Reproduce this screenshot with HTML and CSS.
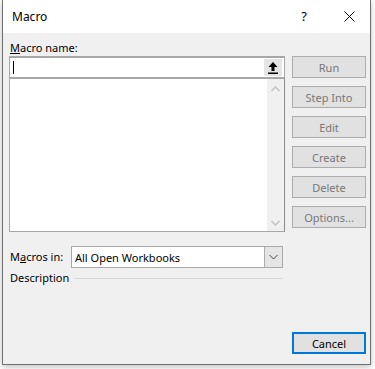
FILE: index.html
```html
<!DOCTYPE html>
<html lang="en">
<head>
  <meta charset="UTF-8">
  <title>Macro</title>
  <link rel="stylesheet" href="styles.css">
</head>
<body>
  <div class="dialog">
    <div class="titlebar">
      <span class="title">Macro</span>
      <span class="help">?</span>
      <span class="close">
        <svg width="11" height="11" viewBox="0 0 11 11"><path d="M0.5 0.5 L10.5 10.5 M10.5 0.5 L0.5 10.5" stroke="#000" stroke-width="1" fill="none"/></svg>
      </span>
    </div>

    <div class="content">
      <div class="main">
        <div class="left">
          <div class="label"><u>M</u>acro name:</div>
          <div class="name-box">
            <span class="caret"></span>
            <span class="pick">
              <svg width="10" height="12" viewBox="0 0 10 12"><path d="M5 0 L9.5 5 L6.5 5 L6.5 9 L3.5 9 L3.5 5 L0.5 5 Z" fill="#000"/><rect x="0" y="10.5" width="10" height="1.5" fill="#000"/></svg>
            </span>
          </div>
          <div class="list">
            <div class="scroll">
              <svg width="9" height="6" viewBox="0 0 9 6"><path d="M0.5 5 L4.5 1 L8.5 5" stroke="#c2c2c2" stroke-width="1.5" fill="none"/></svg>
              <svg width="9" height="6" viewBox="0 0 9 6"><path d="M0.5 1 L4.5 5 L8.5 1" stroke="#c2c2c2" stroke-width="1.5" fill="none"/></svg>
            </div>
          </div>
          <div class="macros-in">
            <span class="label">M<u>a</u>cros in:</span>
            <div class="select">
              <span class="value">All Open Workbooks</span>
              <span class="drop">
                <svg width="9" height="6" viewBox="0 0 9 6"><path d="M0.5 1 L4.5 5 L8.5 1" stroke="#444" stroke-width="1" fill="none"/></svg>
              </span>
            </div>
          </div>
          <div class="description">
            <span class="label">Description</span>
            <span class="rule"></span>
          </div>
        </div>

        <div class="buttons">
          <div class="btn disabled">Run</div>
          <div class="btn disabled">Step Into</div>
          <div class="btn disabled">Edit</div>
          <div class="btn disabled">Create</div>
          <div class="btn disabled">Delete</div>
          <div class="btn disabled">Options...</div>
        </div>
      </div>

      <div class="footer">
        <div class="btn default">Cancel</div>
      </div>
    </div>
  </div>
</body>
</html>
```

FILE: styles.css
```css
body {
  margin: 0;
  width: 375px;
  height: 369px;
  overflow: hidden;
  background-color: #ffffff;
  font-family: 'Noto Sans', 'Open Sans', sans-serif;
  font-size: 11px;
  color: #000000;
}

.dialog {
  margin-left: 2px;
  width: 367px;
  height: 364px;
  border-left: 1px solid #707070;
  border-right: 1px solid #707070;
  border-bottom: 1px solid #707070;
  box-shadow: 0 2px 6px rgba(0, 0, 0, 0.25);
  display: flex;
  flex-direction: column;
  background-color: #f0f0f0;
}

.titlebar {
  height: 33px;
  background-color: #ffffff;
  display: flex;
  align-items: center;
}

.title {
  margin-left: 9px;
  font-size: 12px;
  flex: 1;
  margin-top: -1px;
}

.help {
  font-size: 13px;
  width: 12px;
  text-align: center;
  margin-right: 34px;
  margin-top: -1px;
}

.close {
  display: flex;
  margin-right: 15px;
  margin-top: -1px;
}

.content {
  flex: 1;
  display: flex;
  flex-direction: column;
  padding: 0 4px 10px 6px;
}

.main {
  display: flex;
  gap: 7px;
}

.left {
  width: 276px;
  display: flex;
  flex-direction: column;
}

.label {
  line-height: 16px;
  padding-left: 1px;
}

.left > .label {
  margin-top: 7px;
}

.name-box {
  height: 19px;
  background-color: #ffffff;
  border: 1px solid #a8a8a8;
  border-bottom: none;
  border-top-width: 2px;
  display: flex;
  align-items: center;
  justify-content: space-between;
}

.caret {
  width: 1px;
  height: 13px;
  background-color: #000000;
  margin-left: 3px;
}

.pick {
  width: 18px;
  height: 17px;
  margin-right: 2px;
  background-color: #e5e5e5;
  display: flex;
  align-items: center;
  justify-content: center;
}

.list {
  height: 152px;
  background-color: #ffffff;
  border: 1px solid #a8a8a8;
  border-top-width: 2px;
  border-right-color: #8a8a8a;
  display: flex;
  justify-content: flex-end;
}

.scroll {
  width: 17px;
  background-color: #f0f0f0;
  display: flex;
  flex-direction: column;
  justify-content: space-between;
  align-items: center;
  padding: 7px 0 5px;
}

.macros-in {
  margin-top: 14px;
  display: flex;
  align-items: center;
  justify-content: space-between;
}

.select {
  width: 210px;
  height: 20px;
  margin-right: 2px;
  background-color: #ffffff;
  border: 1px solid #7a7a7a;
  border-color: #a8a8a8;
  display: flex;
  align-items: center;
  justify-content: space-between;
}

.value {
  padding-left: 3px;
}

.drop {
  width: 17px;
  height: 20px;
  background-color: #e5e5e5;
  border-left: 1px solid #acacac;
  display: flex;
  align-items: center;
  justify-content: center;
}

.description {
  margin-top: 2px;
  display: flex;
  align-items: center;
  gap: 5px;
}

.rule {
  flex: 1;
  height: 1px;
  margin-right: 2px;
  background-color: #d7d7d7;
}

.buttons {
  margin-top: 23px;
  width: 74px;
  display: flex;
  flex-direction: column;
  gap: 8px;
}

.btn {
  height: 20px;
  border: 1px solid #adadad;
  background-color: #e1e1e1;
  display: flex;
  align-items: center;
  justify-content: center;
}

.btn.disabled {
  color: #787878;
}

.footer {
  margin-top: auto;
  display: flex;
  justify-content: flex-end;
}

.btn.default {
  width: 70px;
  height: 18px;
  border: 2px solid #0078d7;
}
```
